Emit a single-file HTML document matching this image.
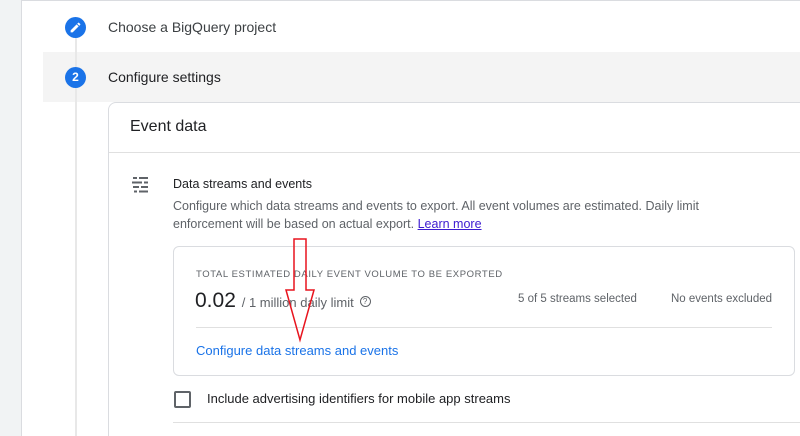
<html style="width:800px;height:436px;overflow:hidden"><head><style>
html,body{overflow:hidden}
body{margin:0;width:800px;height:436px;background:#fff;font-family:"Liberation Sans",sans-serif;position:relative}
.a{position:absolute}
</style></head><body>
<div class="a" style="left:0;top:0;width:21px;height:436px;background:#f1f3f4;border-right:1px solid #dadce0"></div>
<div class="a" style="left:22px;top:0;width:778px;height:1px;background:#dadce0"></div>
<div class="a" style="left:43px;top:52px;width:757px;height:50px;background:#f4f4f4"></div>
<div class="a" style="left:75px;top:36px;width:2px;height:400px;background:#e8e8e8"></div>
<div class="a" style="left:65px;top:17px;width:21px;height:21px;border-radius:50%;background:#1a73e8"></div>
<svg class="a" style="left:69px;top:21px" width="13" height="13" viewBox="0 0 24 24"><path d="M3 17.25V21h3.75L17.81 9.94l-3.75-3.75L3 17.25zM20.71 7.04a1 1 0 000-1.41l-2.34-2.34a1 1 0 00-1.41 0l-1.830 1.83 3.75 3.75 1.83-1.83z" fill="#fff"/></svg>
<div class="a" style="left:108px;top:19px;font-size:14px;color:#3c4043">Choose a BigQuery project</div>
<div class="a" style="left:65px;top:67px;width:21px;height:21px;border-radius:50%;background:#1a73e8;color:#fff;font-size:12px;font-weight:bold;text-align:center;line-height:21px">2</div>
<div class="a" style="left:108px;top:69px;font-size:14px;color:#202124">Configure settings</div>
<div class="a" style="left:108px;top:102px;width:700px;height:340px;border:1px solid #dadce0;border-radius:8px;background:#fff"></div>
<div class="a" style="left:130px;top:118px;font-size:16px;color:#202124">Event data</div>
<div class="a" style="left:109px;top:152px;width:691px;height:1px;background:#e0e0e0"></div>
<svg class="a" style="left:132px;top:177px" width="17" height="16" viewBox="0 0 17 16"><g fill="#5f6368"><rect x="1" y="0" width="4" height="2"/><rect x="7" y="0" width="9" height="2"/><rect x="0" y="4.5" width="10" height="2"/><rect x="12" y="4.5" width="4" height="2"/><rect x="1" y="9" width="6" height="2"/><rect x="9" y="9" width="7" height="2"/><rect x="2" y="13.5" width="3" height="2"/><rect x="7" y="13.5" width="9" height="2"/></g></svg>
<div class="a" style="left:173px;top:177px;font-size:12.5px;color:#202124">Data streams and events</div>
<div class="a" style="left:173px;top:197px;width:580px;font-size:12.5px;line-height:18px;color:#5f6368">Configure which data streams and events to export. All event volumes are estimated. Daily limit enforcement will be based on actual export. <span style="text-decoration:underline;color:#3c1bd0">Learn more</span></div>
<div class="a" style="left:173px;top:246px;width:620px;height:128px;border:1px solid #dadce0;border-radius:6px"></div>
<div class="a" style="left:196px;top:269px;font-size:9.5px;letter-spacing:0.6px;color:#5f6368">TOTAL ESTIMATED DAILY EVENT VOLUME TO BE EXPORTED</div>
<div class="a" style="left:195px;top:289px;font-size:21px;color:#202124">0.02 <span style="font-size:13px;color:#5f6368">/ 1 million daily limit</span> <span style="display:inline-block;width:9px;height:9px;border:1.3px solid #5f6368;border-radius:50%;font-size:8px;line-height:9px;text-align:center;color:#5f6368;vertical-align:3px">?</span></div>
<div class="a" style="left:518px;top:293px;font-size:11.5px;color:#5f6368">5 of 5 streams selected</div>
<div class="a" style="left:671px;top:293px;font-size:11.5px;color:#5f6368">No events excluded</div>
<div class="a" style="left:196px;top:327px;width:576px;height:1px;background:#e0e0e0"></div>
<div class="a" style="left:196px;top:343px;font-size:13px;color:#1a73e8">Configure data streams and events</div>
<div class="a" style="left:174px;top:391px;width:13px;height:13px;border:2px solid #5f6368;border-radius:2px"></div>
<div class="a" style="left:207px;top:391px;font-size:13px;color:#202124">Include advertising identifiers for mobile app streams</div>
<div class="a" style="left:173px;top:422px;width:627px;height:1px;background:#e0e0e0"></div>
<svg class="a" style="left:0;top:0" width="800" height="436"><path d="M294 239H306V290H314L300 340L286 290H294Z" fill="none" stroke="#e8141e" stroke-width="1.5"/></svg>
</body></html>
